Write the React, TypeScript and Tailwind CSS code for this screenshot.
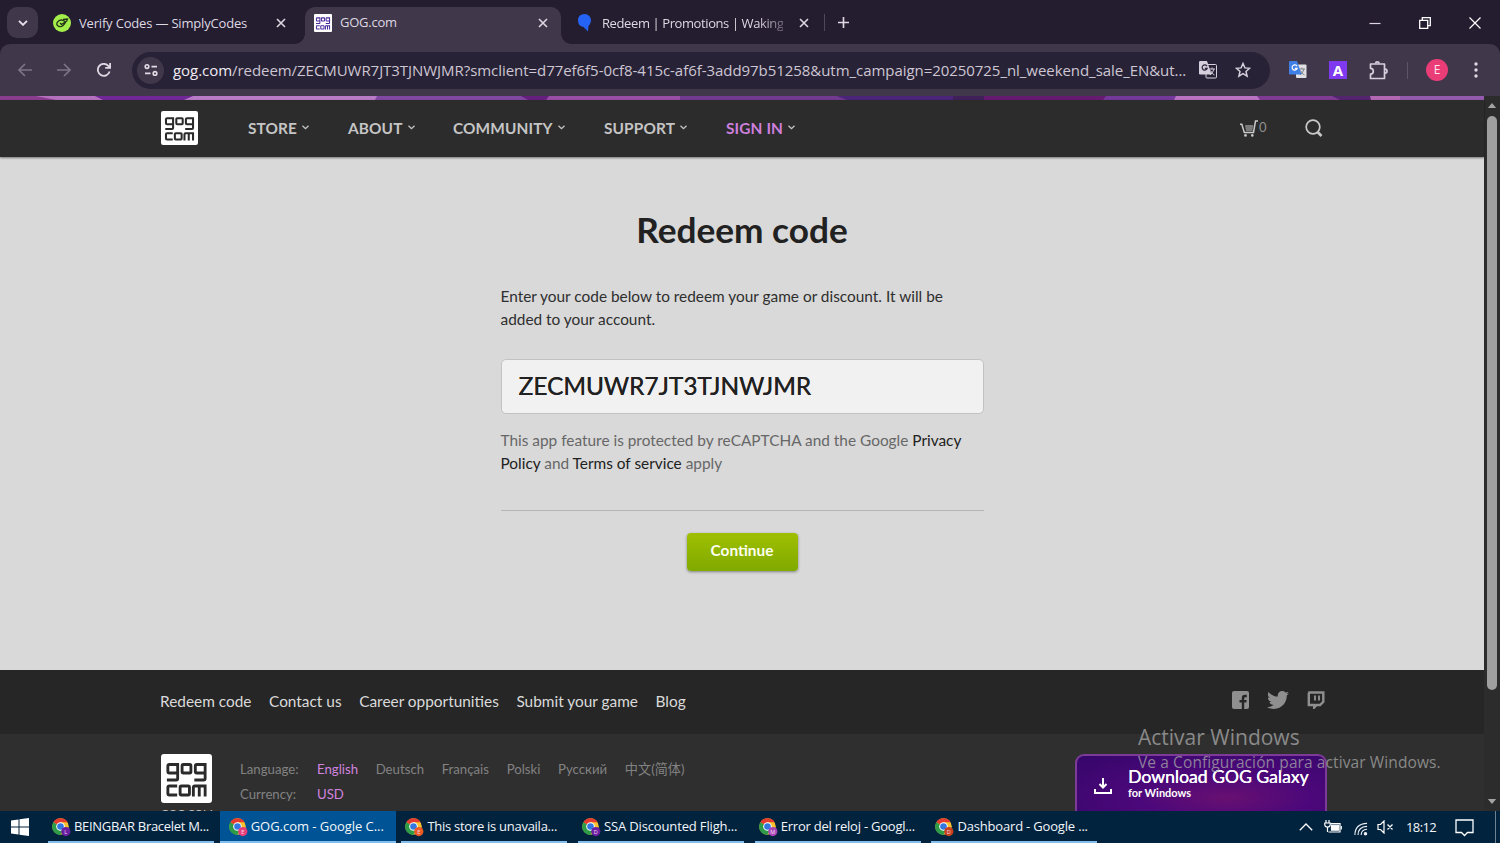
import type { ReactNode } from "react";
import { FaTwitter } from "react-icons/fa";

const UI = "font-['Open_Sans','Noto_Sans',sans-serif]";

// Page artwork above the header: each facet's left edge at the top and bottom
const FACETS = [
  { top: 0, bottom: 0, color: "#8a3c8f" },
  { top: 36, bottom: 56, color: "#b570be" },
  { top: 95, bottom: 103, color: "#702797" },
  { top: 193, bottom: 184, color: "#b97bc6" },
  { top: 377, bottom: 375, color: "#8048a2" },
  { top: 521, bottom: 528, color: "#661f7e" },
  { top: 549, bottom: 546, color: "#984ea6" },
  { top: 680, bottom: 680, color: "#71398f" },
  { top: 837, bottom: 847, color: "#4b2579" },
  { top: 953, bottom: 953, color: "#3f2058" },
  { top: 984, bottom: 984, color: "#651b70" },
  { top: 1106, bottom: 1103, color: "#74389b" },
  { top: 1176, bottom: 1174, color: "#b973c2" },
  { top: 1257, bottom: 1260, color: "#7f3b93" },
  { top: 1332, bottom: 1340, color: "#54246f" },
  { top: 1370, bottom: 1371, color: "#b468b3" },
  { top: 1400, bottom: 1400, color: "#945aae" },
];

const NAV = [
  { label: "STORE", box: "w-[100px]", text: "text-[#c5c5c5]" },
  { label: "ABOUT", box: "w-[105px]", text: "text-[#c5c5c5]" },
  { label: "COMMUNITY", box: "w-[151px]", text: "text-[#c5c5c5]" },
  { label: "SUPPORT", box: "w-[122px]", text: "text-[#c5c5c5]" },
  { label: "SIGN IN", box: "w-[100px]", text: "text-[#cd7fdc]" },
];

const TASKS = [
  { title: "BEINGBAR Bracelet M...", badge: "#6b1fa3", mark: "L", text: "tracking-[-0.3px]" },
  { title: "GOG.com - Google C...", badge: "#e83e7c", mark: "E", active: true, text: "tracking-[-0.04px]" },
  { title: "This store is unavaila...", badge: "#ee5a24", mark: "E", text: "tracking-[-0.27px]" },
  { title: "SSA Discounted Fligh...", badge: "#6b1fa3", mark: "D", text: "tracking-[-0.15px]" },
  { title: "Error del reloj - Googl...", badge: "#a845b8", mark: "M", text: "tracking-[-0.22px]" },
  { title: "Dashboard - Google ...", badge: "#c8401c", mark: "D", text: "tracking-[-0.18px]" },
];

function GogLogo({ className, bg = "#fff", fg = "#2a2a2a" }: { className: string; bg?: string; fg?: string }) {
  return (
    <svg viewBox="0 0 52 49" preserveAspectRatio="none" className={className}>
      <rect width="52" height="49" rx="3" fill={bg} />
      <g fill="none" stroke={fg} strokeWidth="2.9">
        <path d="M17 19H8.5Q7 19 7 17.500V12Q7 10.500 8.500 10.500H17V24.500Q17 26 15.500 26H6" />
        <rect x="21.500" y="10.500" width="9" height="8.500" rx="1.200" />
        <path d="M45 19H36.500Q35 19 35 17.500V12Q35 10.500 36.500 10.500H45V24.500Q45 26 43.500 26H34" />
        <path d="M16.500 32H8.500Q7 32 7 33.500V39.500Q7 41 8.500 41H16.500" />
        <rect x="19.500" y="32" width="9.500" height="9" rx="1.200" />
        <path d="M33 42.500V33.500Q33 32 34.500 32H45V42.500M39 32V42.500" />
      </g>
    </svg>
  );
}

const Cross = ({ className = "size-[10px]" }: { className?: string }) => (
  <svg viewBox="0 0 10 10" className={className} fill="none" stroke="#ded8e3" strokeWidth="1.6">
    <path d="M1 1l8 8M9 1L1 9" />
  </svg>
);

const Translate = ({ front, back, ink }: { front: string; back: string; ink: string }) => (
  <svg viewBox="0 0 18 18" className="size-[18px] shrink-0">
    <rect x="7" y="3.500" width="10.500" height="13.500" rx="1" fill={back} stroke={front === "#d6cfdc" ? front : "none"} />
    <path d="M10 8h6M13 6.500V8M15 8q-1 4-4 6M11.500 9.500q1.500 3.500 4 4.500" fill="none" stroke={ink} strokeWidth="1" />
    <path d="M1.200 0H8l4.500 13.500H1.200Q0 13.500 0 12.300V1.200Q0 0 1.200 0z" fill={front} />
    <path d="M8 5.200A2.600 2.600 0 1 0 8.200 7.300H5.800" fill="none" stroke={front === "#d6cfdc" ? "#282236" : "#fff"} strokeWidth="1.200" />
  </svg>
);

function Tab({ icon, title, titleClass, className }: { icon: ReactNode; title: string; titleClass: string; className: string }) {
  return (
    <div className={`flex items-center ${className}`}>
      {icon}
      <span className={`overflow-hidden whitespace-nowrap text-[13px] text-[#ded8e3] ${titleClass}`}>{title}</span>
      <Cross />
    </div>
  );
}

function ChromeIcon({ badge, mark }: { badge: string; mark: string }) {
  return (
    <svg viewBox="0 0 19 19" className="size-[19px] shrink-0">
      <circle cx="8.500" cy="8.500" r="8.300" fill="#fbc02d" />
      <path d="M8.500 8.500L1.300 4.300A8.300 8.300 0 0 1 15.700 4.300H8.500z" fill="#e53a2e" />
      <path d="M8.500 8.500L1.300 4.300A8.300 8.300 0 0 0 8.500 16.800L12 10.600z" fill="#2d9b48" />
      <circle cx="8.500" cy="8.500" r="4.300" fill="#fff" />
      <circle cx="8.500" cy="8.500" r="3.300" fill="#3477e0" />
      <circle cx="13.800" cy="13.600" r="4.600" fill={badge} />
      <text x="13.800" y="15.700" textAnchor="middle" fontSize="5.500" fill="#f5dcee">{mark}</text>
    </svg>
  );
}

function TabStrip() {
  return (
    <div className="flex h-11 bg-[#241c2f]">
      <div className="ml-[7px] mt-[7px] flex size-[31px] items-center justify-center rounded-[10px] bg-[#40374a]">
        <svg viewBox="0 0 10 6" className="h-[6px] w-[10px]" fill="none" stroke="#e8e2ec" strokeWidth="1.900"><path d="M1 .8l4 4 4-4" /></svg>
      </div>
      <Tab
        className="ml-[15px] w-[252px] pt-[2px]"
        titleClass="ml-[8px] w-[197px] pt-px tracking-[-0.18px]"
        title="Verify Codes — SimplyCodes"
        icon={
          <svg viewBox="0 0 18 18" className="size-[18px]">
            <circle cx="9" cy="9" r="9" fill="#a4ee4b" />
            <path d="M12 7.500Q8 4.500 5 7.500T6 12.500Q10 13.500 13 7.500L8.500 10.500 7 9M10 5.500l4.500-.5-1 2.500" fill="none" stroke="#26351a" strokeWidth="1.300" />
          </svg>
        }
      />
      <div className="relative mt-[7px] w-[256px] rounded-t-[10px] bg-[#40374a]">
        <i className="absolute -left-[10px] bottom-0 size-[10px] bg-[radial-gradient(circle_at_0_0,#241c2f_9.5px,#40374a_10px)]" />
        <i className="absolute -right-[10px] bottom-0 size-[10px] bg-[radial-gradient(circle_at_100%_0,#241c2f_9.5px,#40374a_10px)]" />
        <Tab
          className="h-[31px] pl-[9px]"
          titleClass="ml-[8px] w-[198px] pt-px tracking-[-0.25px]"
          title="GOG.com"
          icon={<GogLogo className="size-[18px]" fg="#492a9b" />}
        />
      </div>
      <Tab
        className="ml-[17px] pt-[2px]"
        titleClass="ml-[10px] w-[181px] mr-[16px] pt-px tracking-[-0.4px] [mask-image:linear-gradient(90deg,#000_155px,#0006_180px)]"
        title="Redeem | Promotions | Waking"
        icon={<svg viewBox="0 0 14 18" className="h-[18px] w-[14px]"><path d="M6.500 0A6.500 6.500 0 0 1 13 7Q12.500 10 10.500 12L10 17.500 5.500 13Q0 12 0 6.500 0 0 6.500 0z" fill="#2563f4" /></svg>}
      />
      <div className="ml-[15px] mt-[14px] h-[17px] w-px bg-[#51475b]" />
      <svg viewBox="0 0 12 12" className="ml-[13px] mt-[17px] size-[11px]" fill="none" stroke="#ded8e3" strokeWidth="1.800"><path d="M6 0v12M0 6h12" /></svg>
      <div className="ml-auto mr-[19px] flex items-center gap-[38px] pt-px">
        <svg viewBox="0 0 12 12" className="size-3" stroke="#ddd6e2" strokeWidth="1.200"><path d="M.5 6.500h11" /></svg>
        <svg viewBox="0 0 12 12" className="size-3" fill="none" stroke="#fff" strokeWidth="1.300"><path d="M.7 3.300h8v8h-8zM3.300 3V.7h8v8H9" /></svg>
        <svg viewBox="0 0 12 12" className="size-3" fill="none" stroke="#fff" strokeWidth="1.200"><path d="M.5.5l11 11M11.500.5l-11 11" /></svg>
      </div>
    </div>
  );
}

function Toolbar() {
  return (
    <div className="h-[52px] bg-[#241c2f]">
      <div className="flex h-full items-center rounded-t-[10px] bg-[#40374a] pl-[18px]">
        <svg viewBox="0 0 14 14" className="size-[14px]" fill="none" stroke="#7d7387" strokeWidth="1.700"><path d="M14 7H1.500M7 1L1 7l6 6" /></svg>
        <svg viewBox="0 0 14 14" className="ml-[25px] size-[14px]" fill="none" stroke="#7d7387" strokeWidth="1.700"><path d="M0 7h12.500M7 1l6 6-6 6" /></svg>
        <svg viewBox="0 0 14 14" className="ml-[26px] size-[14px]" fill="none" stroke="#ded8e3" strokeWidth="1.800"><path d="M12.600 8.500A6 6 0 1 1 11.300 2.800L13 4.700M13.100 0v4.900H8.200" /></svg>
        <div className="ml-[21px] flex h-[37px] w-[1138px] items-center rounded-full bg-[#282236] pl-[5px]">
          <span className="flex size-[27px] shrink-0 items-center justify-center rounded-full bg-[#40374a]">
            <svg viewBox="0 0 14 12" className="h-3 w-[14px]" fill="none" stroke="#e2dce6" strokeWidth="1.600"><circle cx="3" cy="2.600" r="1.800" /><path d="M7.500 2.600H13M1 9.400h5.500" /><circle cx="11" cy="9.400" r="1.800" /></svg>
          </span>
          <span className="ml-[9px] w-[1012px] shrink-0 whitespace-nowrap text-[15px] tracking-[-0.05px] text-[#cdc6d3]">
            <span className="text-[#f0ebf3]">gog.com</span>/redeem/ZECMUWR7JT3TJNWJMR?smclient=d77ef6f5-0cf8-415c-af6f-3add97b51258&amp;utm_campaign=20250725_nl_weekend_sale_EN&amp;ut...
          </span>
          <span className="ml-[14px] shrink-0"><Translate front="#d6cfdc" back="#282236" ink="#d6cfdc" /></span>
          <svg viewBox="0 0 16 16" className="ml-[18px] size-4 shrink-0" fill="none" stroke="#d6cfdc" strokeWidth="1.500"><path d="M8 1.500l1.900 4.400 4.700.4-3.600 3.100 1.100 4.700L8 11.600l-4.100 2.500L5 9.400 1.400 6.300l4.700-.4z" /></svg>
        </div>
        <span className="ml-[19px]"><Translate front="#3f7fe6" back="#e1e1e4" ink="#7c8288" /></span>
        <span className="ml-[22px] flex size-[18px] items-center justify-center bg-[#7f3aef] text-[15px] font-bold leading-none text-white">A</span>
        <svg viewBox="0 0 19 19" className="ml-[22px] size-[19px]" fill="none" stroke="#d6cfdc" strokeWidth="1.700"><path d="M1.500 3H15.500V17.500H1.500V13.200Q4.300 13 4.300 10.300T1.500 7.400z" strokeLinejoin="round" /><path d="M6.500 2.500Q6.700.9 8.300.9T10.200 2.500M16 8.200Q18 8.300 18 10.200T16 12.200" /></svg>
        <div className="ml-[19px] h-[17px] w-px bg-[#5f5569]" />
        <span className="ml-[18px] flex size-[22px] items-center justify-center rounded-full bg-[#ea3d78] text-[12px] text-[#ffe6ee]">E</span>
        <svg viewBox="0 0 4 16" className="ml-[26px] h-4 w-1" fill="#ded8e3"><circle cx="2" cy="2" r="1.700" /><circle cx="2" cy="8" r="1.700" /><circle cx="2" cy="14" r="1.700" /></svg>
      </div>
    </div>
  );
}

function SiteHeader() {
  return (
    <header className="relative flex h-[57px] items-center bg-[#2c2c2c] pl-[161px] shadow-[0_1px_2px_rgba(0,0,0,0.45)]">
      <GogLogo className="mb-px h-[34px] w-[37px]" />
      <nav className="ml-[50px] flex pb-[2px]">
        {NAV.map(item => (
          <div key={item.label} className={`flex items-center whitespace-nowrap ${item.box}`}>
            <span className={`text-[15.4px] font-bold leading-5 tracking-[0.12px] ${item.text}`}>{item.label}</span>
            <svg viewBox="0 0 7 5" className="ml-[5px] h-[5px] w-[7px]" fill="none" stroke="#c5c5c5" strokeWidth="1.300"><path d="M.5.7l3 3 3-3" /></svg>
          </div>
        ))}
      </nav>
      <svg viewBox="0 0 18 17" className="ml-auto h-[17px] w-[18px]" fill="none" stroke="#c9c9c9" strokeWidth="1.500">
        <path d="M0 4.300h1.800l2.500 8.200h9.200L15.500 1H18" /><path d="M5.200 6h8M5.500 8h7.300M6 10h6.500" strokeWidth="1" />
        <circle cx="5.500" cy="15.400" r="1.300" fill="#c9c9c9" stroke="none" /><circle cx="12.300" cy="15.400" r="1.300" fill="#c9c9c9" stroke="none" />
      </svg>
      <span className="ml-px w-[8px] pb-px text-[13px] text-[#8f8f8f]">0</span>
      <svg viewBox="0 0 18 18" className="mb-[2px] ml-[38px] mr-[161px] size-[18px]" fill="none" stroke="#c9c9c9"><circle cx="8" cy="8" r="6.800" strokeWidth="1.700" /><path d="M12.500 13l4 4" strokeWidth="2.600" /></svg>
    </header>
  );
}

function RedeemForm() {
  return (
    <main className="h-[513px] bg-[#d9d9d9] pt-[49px] text-[#212121]">
      <div className="mx-auto w-[483px]">
        <h1 className="text-center text-[35.2px] font-bold leading-[46px]">Redeem code</h1>
        <p className="mt-[33px] text-[15.4px] leading-[23px] text-[#2f2f2f]">Enter your code below to redeem your game or discount. It will be<br />added to your account.</p>
        <div className="mt-[28px] flex h-[55px] items-center rounded-[5px] border-[1.5px] border-[#c2c2c2] bg-[#f1f1f1] pl-[17px] text-[24.4px] [text-shadow:0.3px_0_0_#212121]">ZECMUWR7JT3TJNWJMR</div>
        <p className="mt-[15px] text-[15.4px] leading-[23px] text-[#676767]">
          This app feature is protected by reCAPTCHA and the Google <a className="text-[#212121]">Privacy<br />Policy</a> and <a className="text-[#212121]">Terms of service</a> apply
        </p>
        <hr className="mt-[35px] border-[#b5b5b5]" />
        <button className="mx-auto mt-[22px] flex h-[38px] w-[111px] items-center justify-center rounded-[4px] bg-linear-to-b from-[#9fbf00] to-[#80aa00] pb-[2px] text-[15.4px] font-bold text-[#fcfff0] shadow-[0_1px_3px_rgba(0,0,0,0.4)]">Continue</button>
      </div>
    </main>
  );
}

function SiteFooter() {
  return (
    <footer>
      <div className="flex h-16 items-center bg-[#262626] pb-px pl-[160px] text-[15.4px] text-[#dadada]">
        <div className="flex gap-[17.6px]">
          <a>Redeem code</a>
          <a>Contact us</a>
          <a>Career opportunities</a>
          <a>Submit your game</a>
          <a>Blog</a>
        </div>
        <div className="ml-auto mr-[159px] flex items-center pb-[3px] text-[#8f8f8f]">
          <svg viewBox="0 0 17 18" className="h-[18px] w-[17px]"><path d="M2 0h13q2 0 2 2v14q0 2-2 2h-2.800v-6.500h2.100l.4-2.500h-2.500V7.500q0-1.300 1.300-1.300h1.300V3.800h-2q-3 0-3 3.200v2H7.500v2.500h2.300V18H2q-2 0-2-2V2Q0 0 2 0z" fill="currentColor" /></svg>
          <FaTwitter className="ml-[18px] size-[22px]" />
          <svg viewBox="0 0 18 18" className="ml-[18px] size-[18px]" fill="none" stroke="currentColor"><path d="M2.300 1.500h14v9.300l-3.200 3.200H9.700l-2.500 2.500V14H1.800V2.500z" strokeWidth="2.400" /><path d="M8 4.500v5M12 4.500v5" strokeWidth="1.900" /></svg>
        </div>
      </div>
      <div className="flex h-[77px] overflow-hidden bg-[#2f2f2f] pl-[161px] pt-5 text-[13.200px] text-[#828282]">
        <div className="w-[52px] shrink-0">
          <GogLogo className="h-[49px] w-[51px]" />
          <p className="mt-[3px] whitespace-nowrap text-[10.7px] leading-4 text-[#bdbdbd]">GOG.COM</p>
        </div>
        <div className="ml-[27px] w-[77px] shrink-0 pt-[3px] leading-[25px]">
          <p>Language:</p>
          <p>Currency:</p>
        </div>
        <div className="pt-[3px] leading-[25px]">
          <div className="flex gap-[17.700px] whitespace-nowrap">
            <span className="text-[#d084df]">English</span>
            <span>Deutsch</span>
            <span>Français</span>
            <span>Polski</span>
            <span>Русский</span>
            <span>中文(简体)</span>
          </div>
          <p className="text-[#d084df]">USD</p>
        </div>
        <div className="ml-auto mr-[157px] flex h-[80px] w-[252px] rounded-t-[9px] border-2 border-[#7b3b96] bg-[radial-gradient(ellipse_at_60%_55%,#681071_0%,#4c087a_40%,#35066a_100%)] pl-[17px] pt-[11px] text-white">
          <svg viewBox="0 0 18 16" className="mt-[11px] h-4 w-[18px]" fill="none" stroke="#fff" strokeWidth="2"><path d="M9 0v9M5.500 6L9 9.500 12.500 6M1 11v4h16v-4" /></svg>
          <div className="ml-[16px] whitespace-nowrap">
            <p className="text-[17.600px] leading-[20px] [text-shadow:0.3px_0_0_#fff]">Download GOG Galaxy</p>
            <p className="text-[11px] font-bold leading-[12px]">for Windows</p>
          </div>
        </div>
      </div>
    </footer>
  );
}

function Taskbar() {
  return (
    <div className={`flex h-8 items-center bg-[#02233e] pl-[11px] text-[13px] text-[#f2f6fa] ${UI}`}>
      <svg viewBox="0 0 18 18" className="size-[18px] shrink-0" fill="#fff"><path d="M0 2.500L7.500 1.400V8.500H0zM8.500 1.300L18 0V8.500H8.500zM0 9.500H7.500V16.600L0 15.500zM8.500 9.500H18V18L8.500 16.700z" /></svg>
      <div className="ml-[14px] flex h-full gap-[0.7px]">
        {TASKS.map(task => (
          <div key={task.title} className={`flex h-full w-[176px] shrink-0 flex-col ${task.active ? "bg-[#005394]" : "px-[5px]"}`}>
            <div className={`flex flex-1 items-center gap-[3px] whitespace-nowrap pt-[2px] ${task.active ? "pl-[9px]" : "pl-[4px]"}`}>
              <ChromeIcon badge={task.badge} mark={task.mark} />
              <span className={task.text}>{task.title}</span>
            </div>
            <div className="h-[2px] bg-[#83bdec]" />
          </div>
        ))}
      </div>
      <div className="ml-auto flex items-center">
        <svg viewBox="0 0 14 8" className="h-2 w-[14px]" fill="none" stroke="#fff" strokeWidth="1.300"><path d="M.8 7.200L7 1l6.200 6.200" /></svg>
        <svg viewBox="0 0 18 14" className="ml-[11px] h-[14px] w-[18px]" fill="none" stroke="#fff" strokeWidth="1.200"><path d="M6.500 3.500h9.500v8.500H4.500" /><path d="M7.500 5.200h7v5h-7z" fill="#fff" /><path d="M2 0v3M5 0v3M.8 3h5.400v2Q6 7 3.500 7T.8 5zM3.500 7v5" /><path d="M17.300 6v3.500" /></svg>
        <svg viewBox="0 0 15 15" className="ml-[12px] mt-[3px] size-[14px]" fill="none" stroke="#e9eef3" strokeWidth="1.200"><path d="M1 14Q1 2 14 1.500M4.300 14Q4.300 5 14 4.700M7.700 14Q7.700 8 14 7.800" /><circle cx="12.300" cy="12.500" r="1.300" fill="#fff" /></svg>
        <svg viewBox="0 0 17 14" className="ml-[9px] h-[14px] w-[17px]" fill="none" stroke="#fff" strokeWidth="1.200"><path d="M1 4.500h2.500L7 1v12L3.500 9.500H1zM10.500 4.500l5 5M15.500 4.500l-5 5" /></svg>
        <span className="ml-[12px] w-[31px] whitespace-nowrap pt-px text-[13px] tracking-[-0.6px]">18:12</span>
        <svg viewBox="0 0 19 18" className="ml-[18px] mt-[2px] h-[18px] w-[19px]" fill="none" stroke="#fff" strokeWidth="1.300"><path d="M1 1h17v12.500h-5.500L9.500 16.500l-3-3H1z" /></svg>
        <div className="ml-[21px] h-8 w-px bg-[#6d8394]" />
        <div className="w-[4px]" />
      </div>
    </div>
  );
}

export default function App() {
  return (
    <div className="relative flex h-[843px] w-[1500px] flex-col overflow-hidden">
      <div className={UI}>
        <TabStrip />
        <Toolbar />
      </div>
      <div className="flex h-[715px]">
        <div className="w-[1484px] font-['Lato','Noto_Sans_CJK_SC',sans-serif]">
          <svg viewBox="0 0 1484 4" className="block h-1 w-full">
            {FACETS.map(f => (
              <path key={f.top} d={`M${f.top} 0H1484V4H${f.bottom}z`} fill={f.color} />
            ))}
          </svg>
          <SiteHeader />
          <RedeemForm />
          <SiteFooter />
        </div>
        {/* Page scrollbar */}
        <div className="flex w-4 flex-col items-center justify-between bg-[#2c2c2c] py-[7px]">
          <svg viewBox="0 0 10 6" className="h-[5px] w-[10px]" fill="#a3a3a3"><path d="M5 0l5 6H0z" /></svg>
          <div className="mb-auto mt-[8px] h-[574px] w-[10px] rounded-full bg-[#9f9f9f]" />
          <svg viewBox="0 0 10 6" className="h-[5px] w-[10px]" fill="#a3a3a3"><path d="M0 0h10L5 6z" /></svg>
        </div>
      </div>
      <Taskbar />
      {/* Windows activation watermark */}
      <div className={`absolute left-[1138px] top-[724px] whitespace-nowrap text-[#a9a9a9]/75 ${UI}`}>
        <p className="text-[21px] leading-[27px]">Activar Windows</p>
        <p className="text-[15.500px] leading-[23px] tracking-[0.1px]">Ve a Configuración para activar Windows.</p>
      </div>
    </div>
  );
}
